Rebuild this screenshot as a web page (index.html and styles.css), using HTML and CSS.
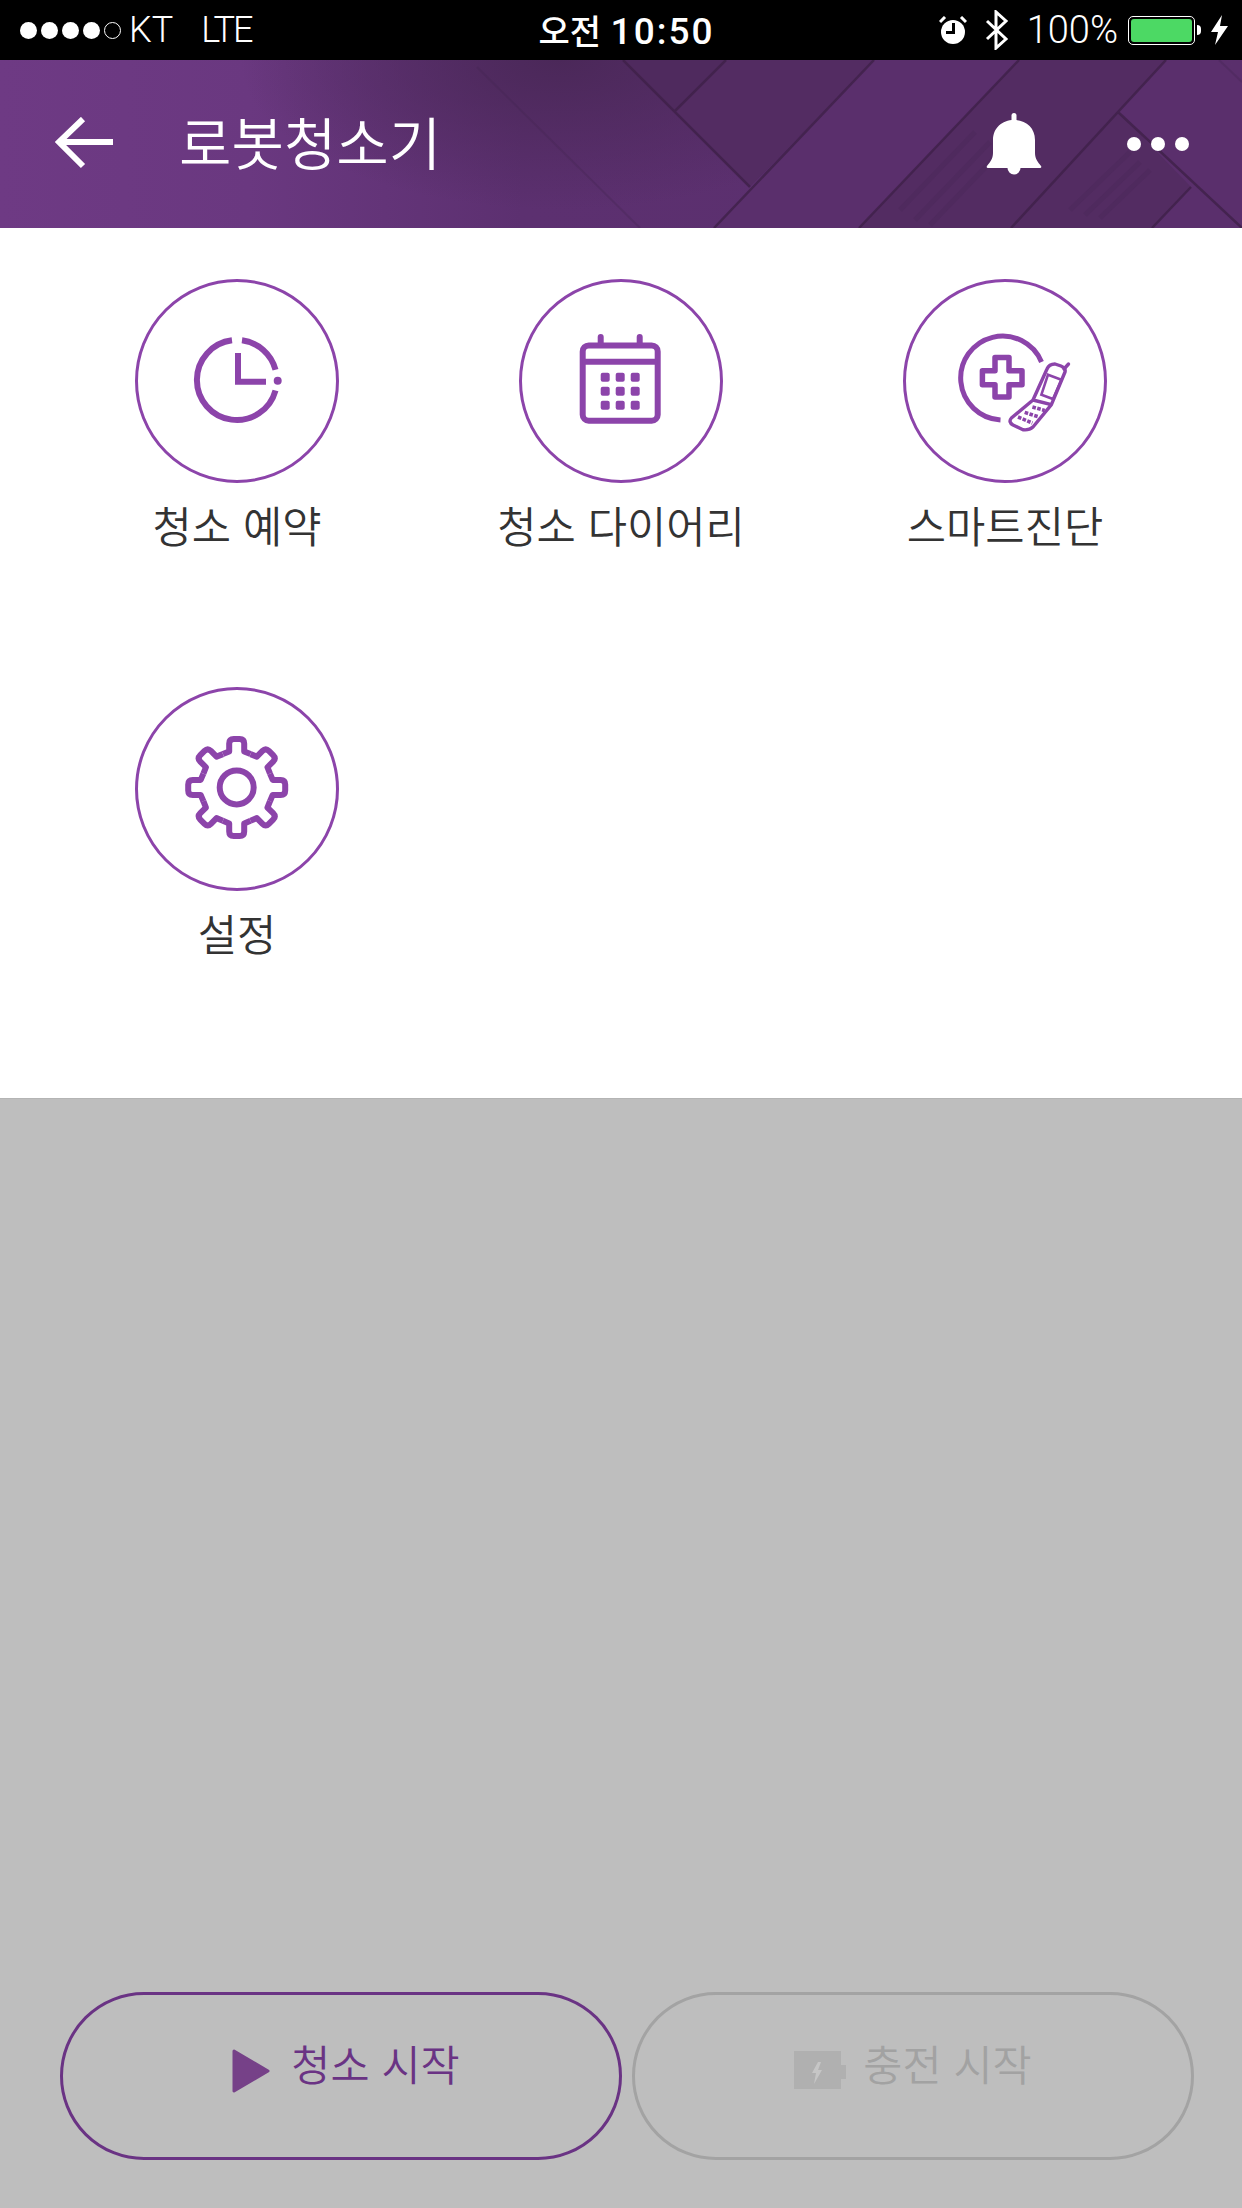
FILE: index.html
```html
<!DOCTYPE html>
<html lang="ko">

<head>
    <meta charset="UTF-8">
    <meta name="viewport" content="width=device-width, initial-scale=1.0">
    <title>로봇청소기</title>
    <link rel="stylesheet" href="styles.css">
</head>

<body>
    <div class="page">
        <div class="statusBar">
            <div class="statusLeft">
                <div class="signal">
                    <span class="dot"></span><span class="dot"></span><span class="dot"></span><span class="dot"></span><span class="dot empty"></span>
                </div>
                <span class="carrier">KT</span>
                <span class="network">LTE</span>
            </div>
            <div class="clock"><span class="clockKo">오전</span> <span class="clockNum">10:50</span></div>
            <div class="statusRight">
                <svg class="alarmIcon" width="28" height="28" viewBox="0 0 28 28">
                    <circle cx="14" cy="16" r="12" fill="#fff" />
                    <path d="M1 6 L6 1 M22 1 L27 6" stroke="#fff" stroke-width="3" fill="none" />
                    <path d="M14.5 7 V16.5 H7" stroke="#000" stroke-width="3" fill="none" />
                </svg>
                <svg class="btIcon" width="24" height="40" viewBox="0 0 24 40">
                    <path d="M2 11 L21 29 L11 38 V2 L21 11 L2 29" stroke="#fff" stroke-width="3" fill="none" />
                </svg>
                <span class="percent">100%</span>
                <div class="battery"><div class="batteryFill"></div></div>
                <div class="batteryNub"></div>
                <svg class="boltIcon" width="17" height="30" viewBox="0 0 17 30">
                    <path d="M11 0 L0 17 H7 L4 30 L17 11 H9 Z" fill="#fff" />
                </svg>
            </div>
        </div>

        <div class="header">
            <svg class="wood" width="1242" height="168" viewBox="0 0 1242 168">
                <polygon class="plankDark" points="621,0 726,0 674,52" />
                <polygon class="plankMid" points="726,0 874,0 750,127 674,52" />
                <polygon class="plankLight" points="874,0 1019,0 859,168 714,168" />
                <polygon class="plankMid" points="1019,0 1166,0 1011,168 859,168" />
                <polygon class="plankLight" points="1166,0 1219,0 1242,22 1242,168 1152,168 1191,127 1118,52" />
                <polygon class="plankMid" points="1118,52 1191,127 1152,168 1011,168" />
                <path class="faint" d="M477 7 L640 168 M1219 0 L1242 22" />
                <path class="seam" d="M623 0 L750 127 M726 0 L674 52 M874 0 L714 168 M1019 0 L859 168 M1166 0 L1011 168 M1118 52 L1242 168 M1191 127 L1152 168" />
                <path class="grain" d="M900 150 L975 72 M915 160 L990 82 M930 165 L1000 92 M1070 150 L1130 92 M1085 155 L1140 102 M1100 158 L1150 110" />
            </svg>
            <svg class="backIcon" width="58" height="52" viewBox="0 0 58 52">
                <path d="M58 25 H4 M28 2 L4 25 L28 49" stroke="#fff" stroke-width="6" fill="none" />
            </svg>
            <div class="headerTitle">로봇청소기</div>
            <svg class="bellIcon" width="56" height="62" viewBox="0 0 56 62">
                <rect x="25.5" y="0" width="5" height="10" rx="2.5" fill="#fff" />
                <circle cx="28" cy="55" r="6.5" fill="#fff" />
                <path d="M28 7 C40 7 49 15 49 27 L49 40 C49 46 52 49 55 53 Q56 55 54 55 L2 55 Q0 55 1 53 C4 49 7 46 7 40 L7 27 C7 15 16 7 28 7 Z" fill="#fff" />
            </svg>
            <div class="moreDots">
                <span class="moreDot"></span><span class="moreDot"></span><span class="moreDot"></span>
            </div>
        </div>

        <div class="menu">
            <div class="menuItem">
                <div class="menuCircle">
                    <svg width="204" height="204" viewBox="0 0 204 204">
                        <path class="line" d="M107 61.3 A40 40 0 0 1 140.5 90.7 M140.5 111.5 A40 40 0 1 1 97 61.3" />
                        <path class="line" d="M103 74 V102.7 H131" />
                        <circle class="solid" cx="142.7" cy="101.7" r="4" />
                    </svg>
                </div>
                <div class="menuLabel">청소 예약</div>
            </div>
            <div class="menuItem">
                <div class="menuCircle">
                    <svg width="204" height="204" viewBox="0 0 204 204">
                        <rect class="line" x="63.7" y="66.4" width="75" height="75.3" rx="6" />
                        <path class="line" d="M63.7 82.7 H138.7" />
                        <path class="line round" d="M81.7 58 V64 M120.7 58 V64" />
                        <g class="solid">
                            <rect x="81.7" y="93.7" width="9" height="9" rx="2" />
                            <rect x="96.7" y="93.7" width="9" height="9" rx="2" />
                            <rect x="111.7" y="93.7" width="9" height="9" rx="2" />
                            <rect x="81.7" y="107.7" width="9" height="9" rx="2" />
                            <rect x="96.7" y="107.7" width="9" height="9" rx="2" />
                            <rect x="111.7" y="107.7" width="9" height="9" rx="2" />
                            <rect x="81.7" y="121.7" width="9" height="9" rx="2" />
                            <rect x="96.7" y="121.7" width="9" height="9" rx="2" />
                            <rect x="111.7" y="121.7" width="9" height="9" rx="2" />
                        </g>
                    </svg>
                </div>
                <div class="menuLabel">청소 다이어리</div>
            </div>
            <div class="menuItem">
                <div class="menuCircle">
                    <svg width="204" height="204" viewBox="0 0 204 204">
                        <path class="line arc" d="M138.5 83 A42 42 0 1 0 97.5 141" />
                        <path class="line thin" d="M92 78.4 H106 V91.7 H119 V105.7 H106 V118 H92 V105.7 H79.4 V91.7 H92 Z" />
                        <path class="line phone" d="M130 121 L144 90 Q146 85 152 85 L158 87 Q163 89 162 93 L148.4 125.7 L130 148 Q126 151.5 120 150.7 L110 146 Q105 143 108.4 139 L130 121 L148.4 125.7" />
                        <path class="line phone round" d="M161 90 L165.5 85" />
                        <path class="line keyLine" d="M129.4 128 L141.7 131.4 M121.7 133.4 L136 138 M115 138 L129.4 144" />
                        <polygon class="line hair" points="145,95.7 158.4,100.7 150,120 138.4,115.7" />
                    </svg>
                </div>
                <div class="menuLabel">스마트진단</div>
            </div>
            <div class="menuItem">
                <div class="menuCircle">
                    <svg width="204" height="204" viewBox="0 0 204 204">
                        <defs>
                            <path id="tooth" d="M-13.8 -33.3 L-7.5 -36 L-7.5 -44 Q-7.5 -48.5 -3 -48.5 H3 Q7.5 -48.5 7.5 -44 L7.5 -36 L13.8 -33.3" />
                        </defs>
                        <g class="line gear" transform="translate(101.7 100.4)">
                            <use href="#tooth" />
                            <use href="#tooth" transform="rotate(45)" />
                            <use href="#tooth" transform="rotate(90)" />
                            <use href="#tooth" transform="rotate(135)" />
                            <use href="#tooth" transform="rotate(180)" />
                            <use href="#tooth" transform="rotate(225)" />
                            <use href="#tooth" transform="rotate(270)" />
                            <use href="#tooth" transform="rotate(315)" />
                            <circle r="17" />
                        </g>
                    </svg>
                </div>
                <div class="menuLabel">설정</div>
            </div>
        </div>

        <div class="bottomArea">
            <div class="pillBtn startBtn">
                <svg class="playIcon" width="38" height="44" viewBox="0 0 38 44">
                    <path d="M2 2 L36 22 L2 42 Z" fill="#764188" stroke="#764188" stroke-width="3" stroke-linejoin="round" />
                </svg>
                <span class="pillText">청소 시작</span>
            </div>
            <div class="pillBtn chargeBtn">
                <svg class="chargeIcon" width="52" height="38" viewBox="0 0 52 38">
                    <path d="M0 0 H47 V14 H52 V28 H47 V38 H0 Z" fill="#b0b0b0" />
                    <path d="M24 11 L18 22 H22 L20 33 L28 19 H24 L27 11 Z" fill="#c6c6c6" />
                </svg>
                <span class="pillText">충전 시작</span>
            </div>
        </div>
    </div>
</body>

</html>
```

FILE: styles.css
```css
* {
    box-sizing: border-box;
}

body {
    margin: 0;
    background-color: #bebebe;
    font-family: "Noto Sans CJK KR", "Noto Sans", sans-serif;
}

.page {
    display: flex;
    flex-direction: column;
    height: 2208px;
}

/* status bar */
.statusBar {
    display: flex;
    align-items: center;
    height: 60px;
    padding: 0 14px 0 20px;
    background-color: #000;
    color: #fff;
}

.statusLeft,
.statusRight {
    display: flex;
    flex: 1;
    align-items: center;
    font-family: Roboto, sans-serif;
    font-size: 36px;
    font-weight: 300;
}

.statusRight {
    justify-content: flex-end;
}

.signal {
    display: flex;
    gap: 4px;
    margin-right: 8px;
}

.dot {
    width: 17px;
    height: 17px;
    border-radius: 50%;
    background-color: #fff;
}

.dot.empty {
    background-color: transparent;
    border: 1px solid #fff;
}

.carrier {
    margin-right: 28px;
}

.network {
    letter-spacing: -2px;
}

.clock {
    margin-left: 5px;
    margin-top: -2px;
    font-size: 34px;
    font-weight: 500;
    white-space: nowrap;
}

.clockNum {
    font-family: Roboto, sans-serif;
    font-size: 37px;
    letter-spacing: 2px;
}

.alarmIcon {
    margin-right: 18px;
}

.btIcon {
    margin-right: 18px;
}

.percent {
    margin-right: 10px;
    font-size: 38px;
}

.battery {
    width: 67px;
    height: 29px;
    padding: 2px;
    border: 1px solid #fff;
    border-radius: 5px;
}

.batteryFill {
    height: 100%;
    border-radius: 3px;
    background-color: #4cd964;
}

.batteryNub {
    width: 4px;
    height: 10px;
    margin-left: 2px;
    margin-right: 10px;
    border-radius: 0 4px 4px 0;
    background-color: #fff;
}

/* header */
.header {
    position: relative;
    display: flex;
    align-items: center;
    height: 168px;
    padding: 0 53px 0 55px;
    overflow: hidden;
    background:
        radial-gradient(ellipse 320px 150px at 560px 0, #4b2859 0%, rgba(75, 40, 89, 0) 100%),
        linear-gradient(90deg, #6e3a84 0%, #6a3880 20%, #5c3070 42%, #5a2f6c 100%);
}

.wood {
    position: absolute;
    top: 0;
    left: 0;
}

.plankDark {
    fill: #4f2a5e;
}

.plankMid {
    fill: #532c62;
}

.plankLight {
    fill: #5a2f6c;
}

.faint {
    fill: none;
    stroke: #43234f;
    stroke-width: 2;
    opacity: 0.3;
}

.seam {
    fill: none;
    stroke: #3f2149;
    stroke-width: 2.5;
    opacity: 0.8;
}

.grain {
    fill: none;
    stroke: #43234f;
    stroke-width: 5;
    opacity: 0.2;
}

.backIcon {
    position: relative;
    flex: none;
    margin-top: -2px;
    margin-right: 66px;
}

.headerTitle {
    position: relative;
    flex: 1;
    margin-top: -9px;
    color: #fff;
    font-size: 57px;
    font-weight: 350;
}

.bellIcon {
    position: relative;
    margin-right: 85px;
}

.moreDots {
    position: relative;
    display: flex;
    gap: 10px;
}

.moreDot {
    width: 14px;
    height: 14px;
    border-radius: 50%;
    background-color: #fff;
}

/* menu grid */
.menu {
    display: grid;
    grid-template-columns: repeat(3, 384px);
    grid-auto-rows: 408px;
    align-content: start;
    height: 871px;
    padding: 51px 45px 0;
    background-color: #fff;
    border-bottom: 1px solid #b4b4b4;
}

.menuItem {
    display: flex;
    flex-direction: column;
    align-items: center;
}

.menuCircle {
    width: 204px;
    height: 204px;
    border: 3px solid #8c44aa;
    border-radius: 50%;
    display: flex;
    align-items: center;
    justify-content: center;
}

.menuCircle svg {
    flex: none;
}

.line {
    fill: none;
    stroke: #8c44aa;
    stroke-width: 6;
}

.line.thin {
    stroke-width: 5.5;
    stroke-linejoin: round;
}

.line.arc {
    stroke-width: 5;
}

.line.gear {
    stroke-width: 6;
    stroke-linejoin: round;
}

.line.phone {
    stroke-width: 3.4;
    stroke-linejoin: round;
}

.line.round {
    stroke-linecap: round;
}

.line.hair {
    stroke-width: 2.6;
}

.line.keyLine {
    stroke-width: 3.6;
    stroke-dasharray: 3.6 1.4;
}

.solid {
    fill: #8c44aa;
}

.menuLabel {
    margin-top: 11px;
    color: #333;
    font-size: 42.7px;
    font-weight: 350;
    line-height: 60px;
    white-space: nowrap;
}

/* bottom buttons */
.bottomArea {
    display: flex;
    flex: 1;
    align-items: flex-end;
    gap: 10px;
    padding: 0 48px 48px 60px;
}

.pillBtn {
    display: flex;
    flex: none;
    align-items: center;
    justify-content: center;
    width: 562px;
    height: 168px;
    border: 3.5px solid #6a3384;
    border-radius: 84px;
}

.pillText {
    font-size: 42.5px;
    font-weight: 350;
    line-height: 60px;
    margin-top: -26px;
}

.startBtn {
    padding-left: 10px;
    color: #6a3384;
}

.playIcon {
    margin-right: 21px;
    margin-top: -11px;
}

.chargeBtn {
    border-color: #a3a3a3;
    color: #a2a2a2;
}

.chargeIcon {
    margin-right: 17px;
    margin-top: -13px;
}
```
